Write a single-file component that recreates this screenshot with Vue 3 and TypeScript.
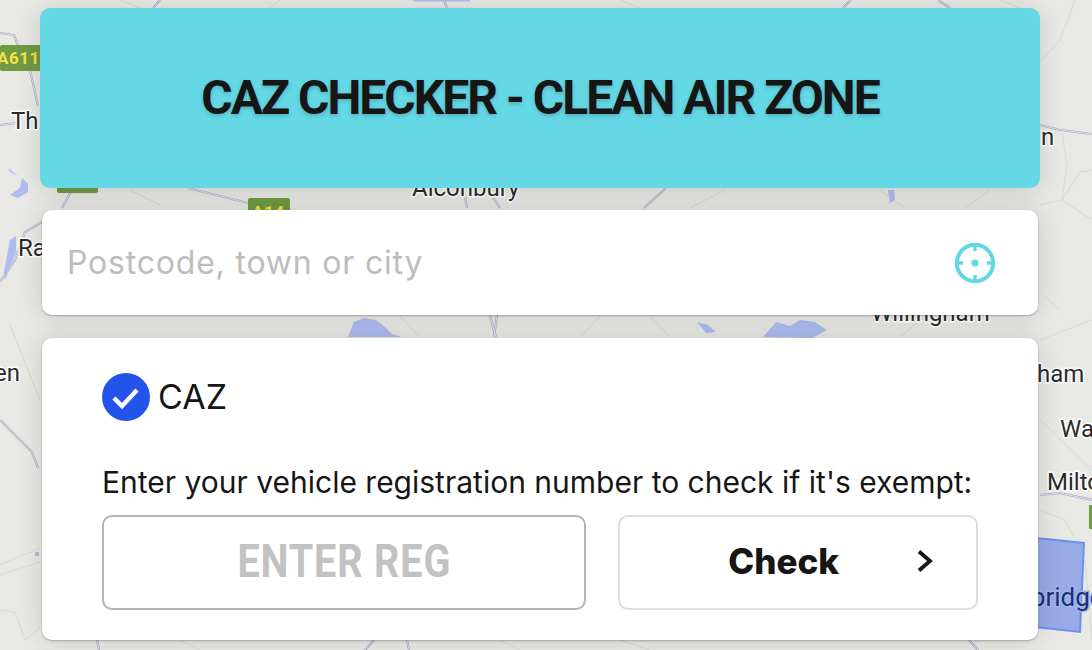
<script setup lang="ts">
interface Label { x: number; y: number; t: string }
const labels: Label[] = [
  { x: 11, y: 129, t: 'Th' },
  { x: 18, y: 256, t: 'Ra' },
  { x: 412, y: 196, t: 'Alconbury' },
  { x: 1041, y: 145, t: 'n' },
  { x: 871, y: 321, t: 'Willingham' },
  { x: -6, y: 381, t: 'en' },
  { x: 1037, y: 382, t: 'ham' },
  { x: 1060, y: 437, t: 'Wa' },
  { x: 1047, y: 490, t: 'Milto' },
]
const roads: string[] = [
  'M0 33 L14 35 L18 46 L30 70 L38 106',
  'M0 125 L16 123',
  'M188 188 L248 203',
  'M72 190 L62 208',
  'M0 282 L15 260 L25 232 L42 222',
  'M0 420 L32 452 L38 468',
  'M160 0 L153 8',
  'M444 0 L447 8',
  'M851 0 L843 8',
  'M938 0 L950 8',
  'M1040 125 L1060 130 L1092 134',
  'M666 188 L644 208',
  'M465 196 L467 208',
  'M492 196 L500 208',
  'M490 315 L493 327 L496 337',
  'M497 315 L494 337',
  'M374 640 L365 650',
  'M407 640 L409 650',
  'M97 640 L99 650',
  'M969 640 L978 650',
  'M1040 495 L1060 493 L1092 500',
]
const lanes: string[] = [
  'M1040 62 L1060 40 L1075 0',
  'M1062 133 L1067 165 L1062 200 L1092 220',
  'M1040 205 L1062 200 L1080 172 L1092 170',
  'M1040 420 L1092 470',
  'M1040 510 L1065 520 L1075 540',
  'M1046 297 L1060 310',
  'M1040 340 L1092 320',
  'M1085 560 L1092 640',
  'M130 190 L160 205 M725 190 L690 208 M880 190 L905 208 M990 190 L965 208',
  'M0 565 L40 548',
  'M0 575 L40 562',
  'M0 610 L15 612 L25 640 L40 628',
  'M10 325 L40 400',
  'M180 640 L200 650 M500 640 L520 650 M620 640 L650 650',
  'M400 316 L420 337 M600 316 L580 337 M650 316 L670 337 M900 337 L925 316',
  'M120 0 L140 8 M280 0 L270 8 M620 0 L640 8 M1000 0 L1020 8',
]
</script>

<template>
  <div class="screen">
    <svg class="map" width="1092" height="650" viewBox="0 0 1092 650">
      <rect width="1092" height="650" fill="#e8e8e5" />
      <g fill="none" stroke="#d8d8d5" stroke-width="1">
        <path v-for="d in lanes" :key="d" :d="d" />
      </g>
      <g fill="none" stroke="#a3a7c6" stroke-width="2.2">
        <path v-for="d in roads" :key="d" :d="d" />
      </g>
      <g fill="none" stroke="#ebeae7" stroke-width="0.9">
        <path v-for="d in roads" :key="d" :d="d" />
      </g>
      <g fill="#adbdf0">
        <path d="M10 195 L20 188 L22 178 L28 184 L28 192 L18 198 Z" />
        <path d="M8 168 L18 176 L10 172 Z" />
        <path d="M4 272 L10 240 L16 236 L16 252 L5 280 Z" />
        <path d="M348 337 L354 322 L364 318 L376 320 L386 328 L392 334 L402 337 Z" />
        <path d="M697 322 L708 325 L716 332 L706 333 Z" />
        <path d="M763 337 L776 322 L790 326 L800 320 L815 322 L827 330 L812 338 Z" />
        <path d="M888 190 L894 190 L895 200 L890 203 Z" />
        <rect x="413" y="0" width="57" height="1.5" />
        <rect x="35" y="552" width="4" height="4" />
      </g>
      <path d="M1036 538 L1084 543 L1080 632 L1036 627 Z" fill="#98abe8" stroke="#6f8fee" stroke-width="2" />
      <g fill="#709b41">
        <rect x="0" y="45" width="42" height="26" rx="2" />
        <rect x="57" y="180" width="41" height="13" rx="2" />
        <rect x="248" y="198" width="42" height="16" rx="2" />
        <rect x="1089" y="505" width="4" height="24" rx="1" />
      </g>
      <text x="-3" y="64" class="shield">A611</text>
      <text x="252" y="218" class="shield">A14</text>
      <text
        v-for="l in labels"
        :key="l.t"
        :x="l.x"
        :y="l.y"
        class="place"
      >{{ l.t }}</text>
      <text x="977" y="606" class="place city">Cambridge</text>
    </svg>

    <main class="stack">
      <header class="banner">
        <h1>CAZ CHECKER - CLEAN AIR ZONE</h1>
      </header>

      <section class="card search">
        <span class="placeholder">Postcode, town or city</span>
        <svg class="locate" width="44" height="44" viewBox="0 0 44 44" fill="none" stroke="#62d7e4" stroke-width="4">
          <circle cx="22" cy="22" r="18.2" />
          <path d="M22 4v6M22 34v6M4 22h6M34 22h6" stroke-width="3.4" />
          <circle cx="22" cy="22" r="3.6" fill="#62d7e4" stroke="none" />
        </svg>
      </section>

      <section class="card check">
        <div class="status">
          <svg width="48" height="48" viewBox="0 0 48 48">
            <circle cx="24" cy="24" r="24" fill="#2453eb" />
            <path d="M12 25 L20 33 L35 17" fill="none" stroke="#fff" stroke-width="4.4" />
          </svg>
          <span>CAZ</span>
        </div>
        <p class="prompt">Enter your vehicle registration number to check if it's exempt:</p>
        <div class="controls">
          <div class="reg"><span>ENTER REG</span></div>
          <button class="go" type="button">
            <span>Check</span>
            <svg width="18" height="26" viewBox="0 0 18 26" fill="none" stroke="#161616" stroke-width="3.8">
              <path d="M3 3.5 L14 13 L3 22.5" />
            </svg>
          </button>
        </div>
      </section>
    </main>
  </div>
</template>

<style>
html, body { margin: 0; padding: 0; overflow: hidden; }
</style>

<style scoped>
.screen {
  position: relative;
  width: 1092px;
  height: 650px;
  overflow: hidden;
  font-family: "Inter", "Noto Sans", sans-serif;
  color: #161616;
}
.map { position: absolute; inset: 0; display: block; }
.place {
  font: 400 24px "Roboto", sans-serif;
  fill: #2c2c2c;
  stroke: #fff;
  stroke-width: 3px;
  paint-order: stroke;
}
.city { fill: #1d2f78; stroke: #a3b3ec; font-size: 26px; }
.shield { font: 700 17px "Roboto", sans-serif; fill: #f2e14c; letter-spacing: 0.5px; }
.stack {
  position: relative;
  display: flex;
  flex-direction: column;
  align-items: flex-start;
  padding: 8px 0 0 40px;
}
.banner {
  width: 1000px;
  height: 180px;
  box-sizing: border-box;
  display: flex;
  align-items: center;
  justify-content: center;
  background: #64d8e5;
  border-radius: 10px;
  box-shadow: 0 2px 24px rgba(0, 0, 0, 0.14);
}
h1 {
  margin: 0;
  font: 700 48px/1 "Roboto", sans-serif;
  letter-spacing: -2px;
  color: #161616;
  text-shadow: 0 2px 4px rgba(0, 0, 0, 0.18);
}
.card {
  width: 996px;
  margin-left: 2px;
  box-sizing: border-box;
  background: #fff;
  border-radius: 10px;
  box-shadow: 0 1px 2px rgba(0, 0, 0, 0.25), 0 0 26px rgba(0, 0, 0, 0.14);
}
.search {
  height: 105px;
  margin-top: 22px;
  display: flex;
  align-items: center;
  justify-content: space-between;
  padding: 0 41px 0 25px;
}
.placeholder { font-size: 32px; color: #bdbdbd; letter-spacing: 0.8px; }
.locate { display: block; }
.check {
  height: 302px;
  margin-top: 23px;
  padding: 35px 60px 0 60px;
}
.status {
  display: flex;
  align-items: center;
  gap: 8px;
  font-size: 34px;
  line-height: 48px;
}
.status svg { display: block; }
.prompt {
  margin: 37px 0 0;
  font-size: 30px;
  line-height: 48px;
  white-space: nowrap;
}
.controls {
  display: flex;
  gap: 32px;
  margin-top: 9px;
}
.reg {
  width: 484px;
  height: 95px;
  box-sizing: border-box;
  display: flex;
  align-items: center;
  justify-content: center;
  padding-bottom: 3px;
  border: 2px solid #b4b4b4;
  border-radius: 10px;
  font: 700 46px/1 "Roboto", sans-serif;
  color: #c2c2c2;
  letter-spacing: 1px;
}
.reg span { display: inline-block; transform: scaleX(0.86); }
.go {
  width: 360px;
  height: 95px;
  box-sizing: border-box;
  display: flex;
  align-items: center;
  justify-content: flex-end;
  gap: 77px;
  padding: 0 42px 3px 0;
  background: #fff;
  border: 2px solid #dedede;
  border-radius: 10px;
  font: 800 35px/1 "Inter", sans-serif;
  color: #161616;
}
.go svg { display: block; }
</style>
